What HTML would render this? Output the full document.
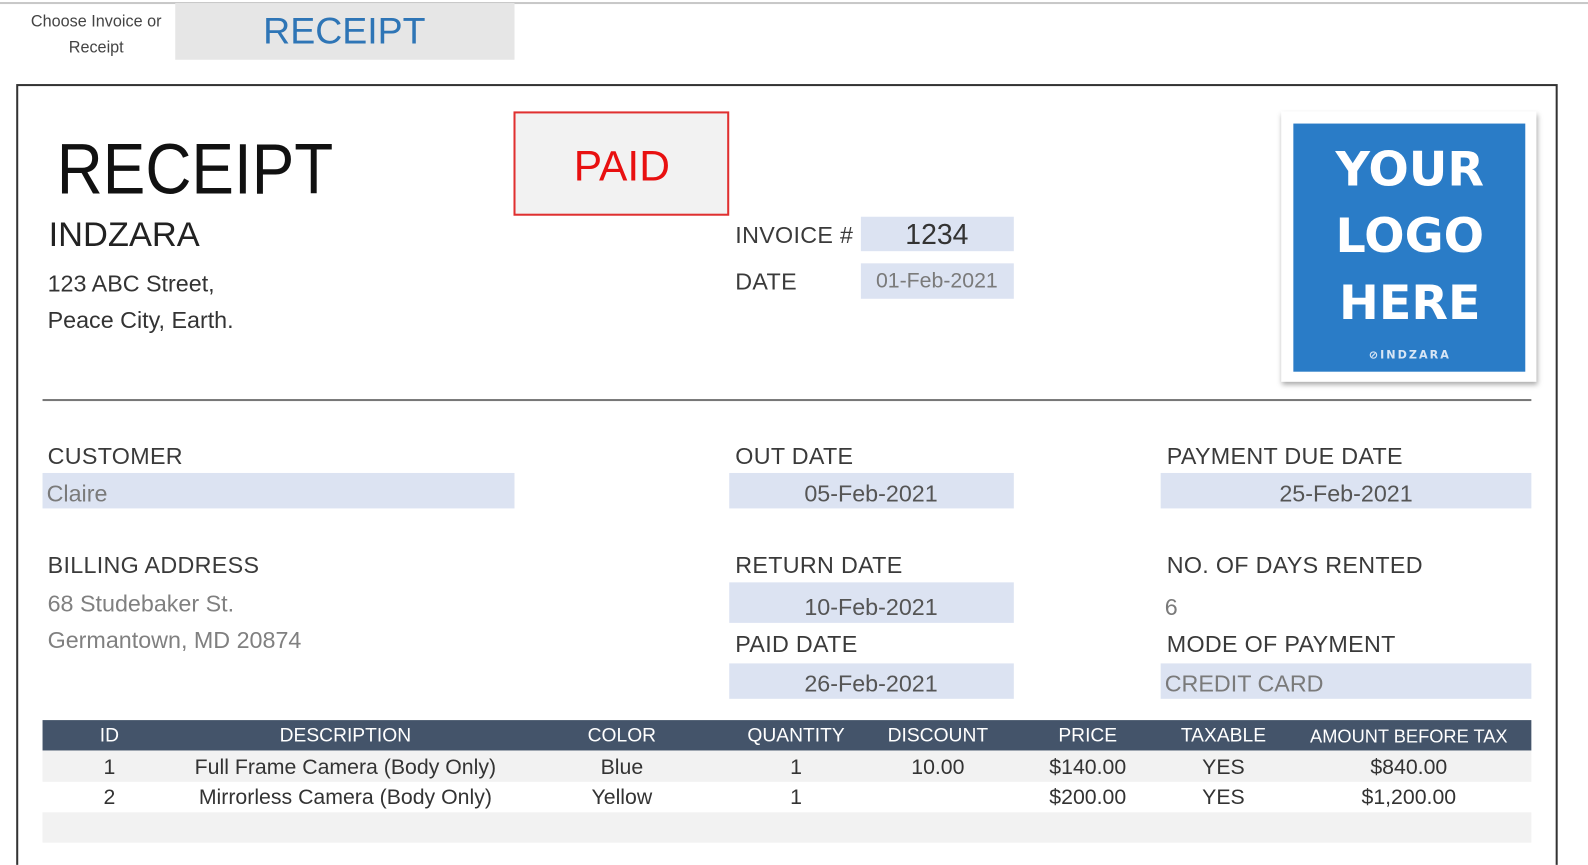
<!DOCTYPE html>
<html style="overflow:hidden;height:865px"><head><meta charset="utf-8"><style>
*{margin:0;padding:0;box-sizing:border-box}
body{width:1588px;height:865px;background:#fff;position:relative;overflow:hidden;font-family:"Liberation Sans",sans-serif;color:#333}
#o{position:absolute;left:0;top:0;width:1588px;height:865px;overflow:hidden}
#w{position:absolute;left:0;top:0;width:1568px;height:854px;transform:scale(1.0128);transform-origin:0 0;overflow:hidden}
.a{position:absolute;white-space:nowrap}
.lbl{font-size:23px;color:#3a3a3a;line-height:1;letter-spacing:.3px}
.box{position:absolute;background:#dce3f2}
.val{position:absolute;font-size:23px;color:#7a7a7a;line-height:1;white-space:nowrap}
.c{transform:translateX(-50%)}
.th{position:absolute;top:716px;font-size:19px;color:#fff;transform:translateX(-50%);white-space:nowrap}
.td{position:absolute;font-size:21px;color:#333;transform:translateX(-50%);white-space:nowrap}
</style></head><body><div id="o"><div id="w">
<div class="a" style="left:0;top:2px;width:1568px;height:2px;background:#c8c8c8"></div>
<div class="a c" style="left:95px;top:9px;font-size:16px;color:#444;text-align:center;line-height:26px">Choose Invoice or<br>Receipt</div>
<div class="a" style="left:173px;top:3px;width:335px;height:56px;background:#e6e6e6"></div>
<div class="a c" style="left:340px;top:12px;font-size:37px;color:#2e75b6;line-height:1">RECEIPT</div>
<div class="a" style="left:16px;top:83px;width:1522px;height:790px;border:2px solid #333"></div>
<div class="a" style="left:56px;top:133px;font-size:63px;color:#111;line-height:1;transform:scaleY(1.12);transform-origin:0 0">RECEIPT</div>
<div class="a" style="left:507px;top:110px;width:213px;height:103px;border:2px solid #e03030;background:#f2f2f2"></div>
<div class="a c" style="left:614px;top:143px;font-size:42px;color:#e81010;line-height:1">PAID</div>
<div class="a" style="left:48px;top:215px;font-size:34px;color:#222;line-height:1">INDZARA</div>
<div class="a" style="left:47px;top:262px;font-size:23px;color:#333;line-height:36px">123 ABC Street,<br>Peace City, Earth.</div>
<div class="a lbl" style="left:726px;top:221px">INVOICE #</div>
<div class="box" style="left:850px;top:214px;width:151px;height:34px"></div>
<div class="a c" style="left:925px;top:218px;font-size:28px;color:#333;line-height:1">1234</div>
<div class="a lbl" style="left:726px;top:267px">DATE</div>
<div class="box" style="left:850px;top:260px;width:151px;height:35px"></div>
<div class="val c" style="left:925px;top:267px;font-size:21px">01-Feb-2021</div>
<div class="a" style="left:1265px;top:110px;width:252px;height:267px;background:#fff;box-shadow:1px 3px 5px rgba(0,0,0,.35)"></div>
<div class="a" style="left:1277px;top:122px;width:229px;height:245px;background:#2a7cc7"></div>
<div class="a c" style="left:1392px;top:135px;font-family:'DejaVu Sans',sans-serif;font-weight:bold;font-size:47px;color:#fff;line-height:66px;text-align:center">YOUR<br>LOGO<br>HERE</div>
<div class="a c" style="left:1392px;top:344px;font-family:'DejaVu Sans',sans-serif;font-weight:bold;font-size:11px;color:#d8e6f5;letter-spacing:2px">⊘INDZARA</div>
<div class="a" style="left:42px;top:394px;width:1470px;height:2px;background:#777"></div>
<div class="a lbl" style="left:47px;top:439px">CUSTOMER</div>
<div class="box" style="left:42px;top:467px;width:466px;height:35px"></div>
<div class="val" style="left:46px;top:476px">Claire</div>
<div class="a lbl" style="left:726px;top:439px">OUT DATE</div>
<div class="box" style="left:720px;top:467px;width:281px;height:35px"></div>
<div class="val c" style="left:860px;top:476px;color:#555">05-Feb-2021</div>
<div class="a lbl" style="left:1152px;top:439px">PAYMENT DUE DATE</div>
<div class="box" style="left:1146px;top:467px;width:366px;height:35px"></div>
<div class="val c" style="left:1329px;top:476px;color:#555">25-Feb-2021</div>
<div class="a lbl" style="left:47px;top:547px">BILLING ADDRESS</div>
<div class="a" style="left:47px;top:578px;font-size:23px;color:#808080;line-height:36px">68 Studebaker St.<br>Germantown, MD 20874</div>
<div class="a lbl" style="left:726px;top:547px">RETURN DATE</div>
<div class="box" style="left:720px;top:575px;width:281px;height:40px"></div>
<div class="val c" style="left:860px;top:588px;color:#555">10-Feb-2021</div>
<div class="a lbl" style="left:1152px;top:547px">NO. OF DAYS RENTED</div>
<div class="val" style="left:1150px;top:588px">6</div>
<div class="a lbl" style="left:726px;top:625px">PAID DATE</div>
<div class="box" style="left:720px;top:655px;width:281px;height:35px"></div>
<div class="val c" style="left:860px;top:664px;color:#555">26-Feb-2021</div>
<div class="a lbl" style="left:1152px;top:625px">MODE OF PAYMENT</div>
<div class="box" style="left:1146px;top:655px;width:366px;height:35px"></div>
<div class="val" style="left:1150px;top:664px">CREDIT CARD</div>
<div class="a" style="left:42px;top:711px;width:1470px;height:30px;background:#44546a"></div>
<div class="a" style="left:42px;top:741px;width:1470px;height:31px;background:#f2f2f2"></div>
<div class="a" style="left:42px;top:802px;width:1470px;height:30px;background:#f2f2f2"></div>
<div class="th" style="left:108px">ID</div>
<div class="th" style="left:341px">DESCRIPTION</div>
<div class="th" style="left:614px">COLOR</div>
<div class="th" style="left:786px">QUANTITY</div>
<div class="th" style="left:926px">DISCOUNT</div>
<div class="th" style="left:1074px">PRICE</div>
<div class="th" style="left:1208px">TAXABLE</div>
<div class="th" style="left:1391px;font-size:18px;top:717px">AMOUNT BEFORE TAX</div>
<div class="td" style="left:108px;top:746px">1</div>
<div class="td" style="left:341px;top:746px">Full Frame Camera (Body Only)</div>
<div class="td" style="left:614px;top:746px">Blue</div>
<div class="td" style="left:786px;top:746px">1</div>
<div class="td" style="left:926px;top:746px">10.00</div>
<div class="td" style="left:1074px;top:746px">$140.00</div>
<div class="td" style="left:1208px;top:746px">YES</div>
<div class="td" style="left:1391px;top:746px">$840.00</div>
<div class="td" style="left:108px;top:776px">2</div>
<div class="td" style="left:341px;top:776px">Mirrorless Camera (Body Only)</div>
<div class="td" style="left:614px;top:776px">Yellow</div>
<div class="td" style="left:786px;top:776px">1</div>
<div class="td" style="left:1074px;top:776px">$200.00</div>
<div class="td" style="left:1208px;top:776px">YES</div>
<div class="td" style="left:1391px;top:776px">$1,200.00</div>
</div></div></body></html>
